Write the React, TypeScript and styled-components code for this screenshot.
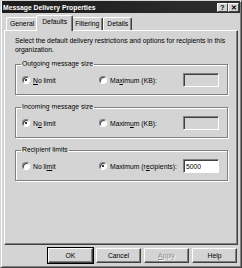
import React from "react";
import styled, { createGlobalStyle } from "styled-components";

const Global = createGlobalStyle`
  * { box-sizing: border-box; }
  html, body { margin: 0; padding: 0; background: #d4d4d4; }
  body { font-family: "Liberation Sans", Arial, sans-serif; font-size: 6.8px; color: #000; }
`;

const Window = styled.div`
  width: 242px;
  height: 268px;
  background: #d4d4d4;
  border: 1px solid;
  border-color: #d4d4d4 #404040 #404040 #d4d4d4;
  box-shadow: inset 1px 1px #ffffff, inset -1px -1px #808080;
  padding: 0 1px 1px 1px;
  display: flex;
  flex-direction: column;
`;

const TitleBar = styled.div`
  height: 12px;
  background: linear-gradient(90deg, #1c1c1c, #2e2e2e);
  display: flex;
  align-items: center;
  padding: 0 1px 0 1px;
`;

const Title = styled.div`
  flex: 1;
  color: #fff;
  font-weight: bold;
  font-size: 6.8px;
`;

const CapButton = styled.div`
  width: 11px;
  height: 9px;
  background: #d4d4d4;
  border: 1px solid;
  border-color: #fff #404040 #404040 #fff;
  display: flex;
  align-items: center;
  justify-content: center;
  font-weight: bold;
  font-size: 7px;
  line-height: 1;
`;

const Content = styled.div`
  padding: 2px 2px 0 2px;
  display: flex;
  flex-direction: column;
`;

const TabRow = styled.div`
  height: 15px;
  display: flex;
  align-items: flex-end;
  padding-left: 2px;
  position: relative;
  z-index: 2;
`;

const Tab = styled.div<{ active?: boolean }>`
  height: ${(p) => (p.active ? 16 : 13)}px;
  padding: 0 ${(p) => (p.active ? 5 : 3)}px;
  margin: 0 ${(p) => (p.active ? -2 : 0)}px ${(p) => (p.active ? -1 : 0)}px;
  background: #d4d4d4;
  border-top: 1px solid #fff;
  border-left: 1px solid #fff;
  border-right: 1px solid #404040;
  border-radius: 2px 2px 0 0;
  box-shadow: inset -1px 0 #808080;
  display: flex;
  align-items: flex-start;
  padding-top: 2px;
  position: relative;
  z-index: ${(p) => (p.active ? 2 : 1)};
`;

const Panel = styled.div`
  height: 215px;
  border: 1px solid;
  border-color: #fff #404040 #404040 #fff;
  box-shadow: inset -1px -1px #808080;
  padding: 5px 9px 0 10px;
  display: flex;
  flex-direction: column;
`;

const Desc = styled.div`
  line-height: 9px;
  margin-bottom: 6px;
`;

const Group = styled.fieldset`
  margin: 0 0 8px 0;
  height: 35px;
  border: 1px solid #808080;
  box-shadow: 1px 1px #fff, inset 1px 1px #fff;
  padding: 5px 0 0 6px;
  display: flex;
  align-items: center;
  & > legend {
    padding: 0 1px;
    margin-left: -1px;
    line-height: 8px;
  }
`;

const Option = styled.label<{ width: number }>`
  width: ${(p) => p.width}px;
  display: flex;
  align-items: center;
  gap: 3px;
`;

const Radio = styled.span<{ checked?: boolean }>`
  width: 8px;
  height: 8px;
  border-radius: 50%;
  background: #fff;
  border: 1px solid;
  border-color: #808080 #fff #fff #808080;
  box-shadow: inset 1px 1px #404040;
  display: flex;
  align-items: center;
  justify-content: center;
  &::after {
    content: "";
    width: 2px;
    height: 2px;
    border-radius: 50%;
    background: #000;
    display: ${(p) => (p.checked ? "block" : "none")};
  }
`;

const Key = styled.span`
  text-decoration: underline;
`;

const TextBox = styled.div<{ disabled?: boolean }>`
  width: 36px;
  height: 14px;
  margin-left: auto;
  margin-right: 8px;
  background: ${(p) => (p.disabled ? "#d4d4d4" : "#fff")};
  border: 1px solid;
  border-color: #808080 #fff #fff #808080;
  box-shadow: inset 1px 1px #404040;
  padding: 2px 2px;
  line-height: 9px;
`;

const ButtonRow = styled.div`
  display: flex;
  justify-content: flex-end;
  gap: 3px;
  margin-top: 3px;
  padding-right: 1px;
`;

const Button = styled.div<{ disabled?: boolean; primary?: boolean }>`
  width: 45px;
  height: 15px;
  border: 1px solid;
  border-color: #fff #404040 #404040 #fff;
  box-shadow: inset -1px -1px #808080 ${(p) => (p.primary ? ", 0 0 0 1px #000" : "")};
  display: flex;
  align-items: center;
  justify-content: center;
  color: ${(p) => (p.disabled ? "#8a8a8a" : "#000")};
  text-shadow: ${(p) => (p.disabled ? "1px 1px #fff" : "none")};
`;

export default function App() {
  return (
    <>
      <Global />
      <Window>
        <TitleBar>
          <Title>Message Delivery Properties</Title>
          <CapButton>?</CapButton>
          <CapButton>✕</CapButton>
        </TitleBar>
        <Content>
          <TabRow>
            <Tab>General</Tab>
            <Tab active>Defaults</Tab>
            <Tab>Filtering</Tab>
            <Tab>Details</Tab>
          </TabRow>
          <Panel>
            <Desc>
              Select the default delivery restrictions and options for recipients in this organization.
            </Desc>
            <Group>
              <legend>Outgoing message size</legend>
              <Option width={77}>
                <Radio checked />
                <span><Key>N</Key>o limit</span>
              </Option>
              <Option width={80}>
                <Radio />
                <span>Ma<Key>x</Key>imum (KB):</span>
              </Option>
              <TextBox disabled />
            </Group>
            <Group>
              <legend>Incoming message size</legend>
              <Option width={77}>
                <Radio checked />
                <span>N<Key>o</Key> limit</span>
              </Option>
              <Option width={80}>
                <Radio />
                <span>Maxim<Key>u</Key>m (KB):</span>
              </Option>
              <TextBox disabled />
            </Group>
            <Group>
              <legend>Recipient limits</legend>
              <Option width={77}>
                <Radio />
                <span>No li<Key>m</Key>it</span>
              </Option>
              <Option width={80}>
                <Radio checked />
                <span>Maximum (r<Key>e</Key>cipients):</span>
              </Option>
              <TextBox>5000</TextBox>
            </Group>
          </Panel>
          <ButtonRow>
            <Button primary>OK</Button>
            <Button>Cancel</Button>
            <Button disabled><span><Key>A</Key>pply</span></Button>
            <Button>Help</Button>
          </ButtonRow>
        </Content>
      </Window>
    </>
  );
}
